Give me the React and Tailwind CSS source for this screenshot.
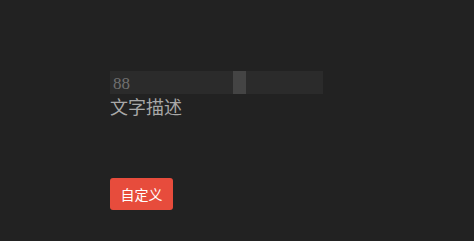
const App = () => {
  return (
    <div className="min-h-[241px] w-full bg-[#222222] pl-[110px] pt-[71px]">
      <div className="flex h-[23px] w-[213px] items-center bg-[#2b2b2b] relative">
        <span className="pl-[3px] pt-[1px] text-[17px] leading-none text-[#707070] font-['Times_New_Roman','Liberation_Serif',serif]">
          88
        </span>
        <div className="absolute left-[123px] top-0 h-[23px] w-[13px] bg-[#444444]" />
      </div>
      <p className="mt-[3px] text-[18px] leading-[22px] text-[#a8a8a8] font-['Times_New_Roman','Liberation_Serif','Noto_Sans_CJK_SC',serif]">
        文字描述
      </p>
      <button className="mt-[59px] flex h-[32px] w-[63px] items-center justify-center rounded-[3px] bg-[#e74c3c] text-[14px] text-white font-['Noto_Sans_CJK_SC',sans-serif]">
        自定义
      </button>
    </div>
  );
};

export default App;
